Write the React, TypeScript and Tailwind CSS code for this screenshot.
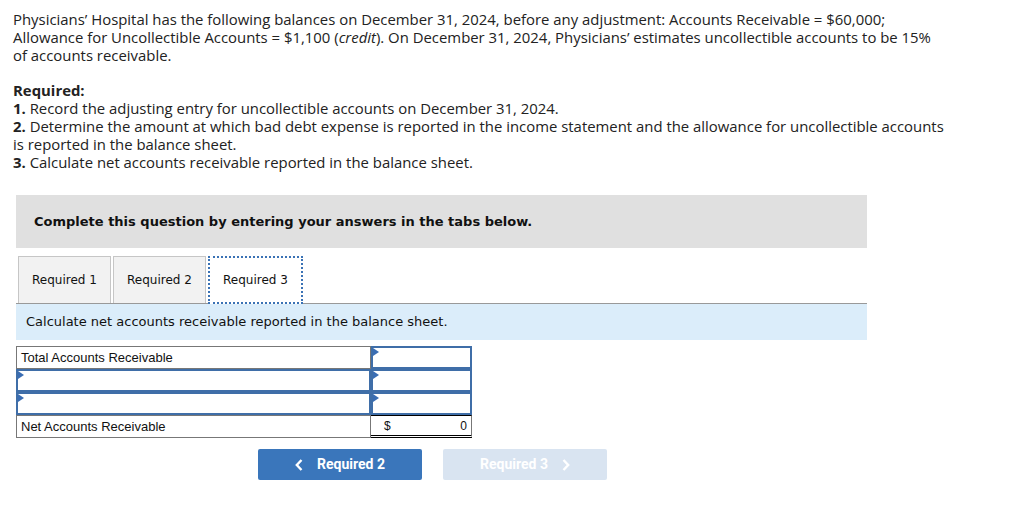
import React from "react";

const Flag = () => (
  <svg className="absolute left-0 top-0" width="6" height="8" viewBox="0 0 6 8">
    <polygon points="0,0 6,4 0,8" fill="#3a6db3" />
  </svg>
);

export default function App() {
  const body = { fontFamily: "'Open Sans', Lato, 'Liberation Sans', sans-serif" };
  const verdana = { fontFamily: "'DejaVu Sans', Verdana, sans-serif" };
  const arial = { fontFamily: "'Liberation Sans', Arial, sans-serif" };
  return (
    <div className="w-[1032px] h-[516px] bg-white text-[#222]">
      <div className="pl-[13px] pt-[10px] text-[14.9px] leading-[18px] whitespace-nowrap" style={body}>
        <p>
          Physicians’ Hospital has the following balances on December 31, 2024, before any adjustment: Accounts Receivable = $60,000;
          <br />
          Allowance for Uncollectible Accounts = $1,100 (<i>credit</i>). On December 31, 2024, Physicians’ estimates uncollectible accounts to be 15%
          <br />
          of accounts receivable.
        </p>
        <p className="mt-[17px] font-bold">Required:</p>
        <p><b>1.</b> Record the adjusting entry for uncollectible accounts on December 31, 2024.</p>
        <p>
          <b>2.</b> Determine the amount at which bad debt expense is reported in the income statement and the allowance for uncollectible accounts
          <br />
          is reported in the balance sheet.
        </p>
        <p><b>3.</b> Calculate net accounts receivable reported in the balance sheet.</p>
      </div>

      <div className="ml-[16px] w-[851px]">
        <div className="mt-[24px] h-[53px] bg-[#e0e0e0] flex items-center pl-[18px] text-[13px] font-bold text-[#111]" style={verdana}>
          Complete this question by entering your answers in the tabs below.
        </div>

        <div className="mt-[8px] flex items-end h-[47px] text-[12px] text-[#111]" style={verdana}>
          <div className="ml-[2px] w-[93px] h-[47px] bg-[#f2f2f2] border border-b-0 border-[#c6c6c6] flex items-center justify-center">Required 1</div>
          <div className="ml-[2px] w-[93px] h-[47px] bg-[#f2f2f2] border border-b-0 border-[#c6c6c6] flex items-center justify-center">Required 2</div>
          <div className="ml-[2px] w-[95px] h-[48px] bg-white border-2 border-dotted border-[#3a72b5] flex items-center justify-center -mb-px relative z-10">Required 3</div>
        </div>
        <div className="h-[37px] bg-[#dbedfa] border-t border-[#999] flex items-center pl-[10px] text-[13px] text-[#111]" style={verdana}>
          Calculate net accounts receivable reported in the balance sheet.
        </div>
      </div>

      <div className="ml-[16px] mt-[6px] w-[456px] text-[13px] text-[#111]" style={arial}>
        <div className="flex h-[23px]">
          <div className="w-[355px] border border-[#777] flex items-center pl-[4px]">Total Accounts Receivable</div>
          <div className="relative w-[101px] border-2 border-[#3f6ea8]"><Flag /></div>
        </div>
        <div className="flex h-[23px]">
          <div className="relative w-[355px] border-2 border-[#3f6ea8]"><Flag /></div>
          <div className="relative w-[101px] border-2 border-[#3f6ea8]"><Flag /></div>
        </div>
        <div className="flex h-[23px]">
          <div className="relative w-[355px] border-2 border-[#3f6ea8]"><Flag /></div>
          <div className="relative w-[101px] border-2 border-[#3f6ea8]"><Flag /></div>
        </div>
        <div className="flex h-[23px]">
          <div className="w-[355px] border border-[#777] flex items-center pl-[4px]">Net Accounts Receivable</div>
          <div className="w-[101px] border-t border-t-black border-r border-r-[#777] border-b-[3px] border-b-black border-double flex items-center justify-between pl-[13px] pr-[4px] text-[12px]">
            <span>$</span>
            <span>0</span>
          </div>
        </div>
      </div>

      <div className="mt-[11px] flex" style={{ fontFamily: "Roboto, 'Liberation Sans', sans-serif" }}>
        <div className="ml-[258px] w-[164px] h-[31px] rounded-[2px] bg-[#3a76bb] text-white font-bold text-[14px] flex items-center justify-center gap-[14px]">
          <svg width="8" height="12" viewBox="0 0 8 12"><polyline points="6.5,1 1.8,6 6.5,11" fill="none" stroke="white" strokeWidth="2.4" /></svg>
          <span>Required 2</span>
        </div>
        <div className="ml-[21px] w-[164px] h-[31px] rounded-[2px] bg-[#d9e4f1] text-white font-bold text-[14px] flex items-center justify-center gap-[14px]">
          <span>Required 3</span>
          <svg width="8" height="12" viewBox="0 0 8 12"><polyline points="1.5,1 6.2,6 1.5,11" fill="none" stroke="white" strokeWidth="2.4" /></svg>
        </div>
      </div>
    </div>
  );
}
